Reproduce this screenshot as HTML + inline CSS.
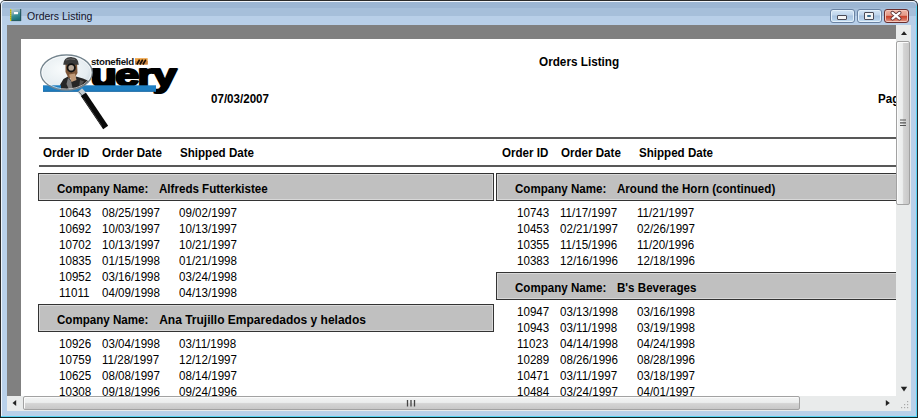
<!DOCTYPE html>
<html><head><meta charset="utf-8"><style>
html,body{margin:0;padding:0;width:918px;height:418px;overflow:hidden;background:#fff;font-family:"Liberation Sans",sans-serif;}
.ab{position:absolute;}
#frame{position:absolute;left:0;top:0;width:918px;height:418px;background:#b9d1ea;border-radius:5px 5px 0 0;overflow:hidden;}
.t1{position:absolute;left:0;top:2px;width:918px;height:6px;background:#9cb6d3;}
.t2{position:absolute;left:0;top:8px;width:918px;height:8px;background:#a6bfda;}
.t3{position:absolute;left:0;top:16px;width:918px;height:9px;background:#b8cfe8;}
#bd{position:absolute;left:0;top:0;width:916px;height:417px;border:1px solid #2a2a2a;border-bottom:0;border-radius:5px 5px 0 0;}
#hl{position:absolute;left:1px;top:1px;width:914px;height:416px;border-top:1px solid #f2f6fb;border-left:1px solid #eef5fc;border-radius:4px 4px 0 0;}
#cyanR{position:absolute;left:916px;top:6px;width:1px;height:411px;background:#58d4f4;}
#cyanB{position:absolute;left:1px;top:416px;width:916px;height:1px;background:#58d4f4;}
#darkB{position:absolute;left:0;top:417px;width:918px;height:1px;background:#102828;}
#title{position:absolute;left:27px;top:7px;font-size:11px;color:#14142a;line-height:18px;white-space:nowrap;transform:scaleX(0.955);transform-origin:0 0;}
.wb{position:absolute;top:9px;width:23px;height:12px;border:1px solid #6a83a3;border-radius:3px;background:linear-gradient(#d6e6f5 0,#c0d6ec 40%,#a9c3df 50%,#b4d0ea 80%,#cfe6f6 100%);box-shadow:inset 0 0 0 1px #e4f1fb;}
.wbx{position:absolute;top:9px;width:23px;height:12px;border:1px solid #6a2e2e;border-radius:3px;background:linear-gradient(#f0b4a4 0,#e49a88 45%,#c8412a 50%,#d0533c 65%,#e09c8c 100%);box-shadow:inset 0 0 0 1px #f4c8bc;}
#gray{position:absolute;left:7px;top:25px;width:889px;height:371px;background:#808080;}
#page{position:absolute;left:21px;top:39px;width:875px;height:357px;background:#fff;}
#content{position:absolute;left:0;top:0;width:918px;height:418px;clip-path:inset(39px 22px 22px 21px);}
.b{font-weight:bold;}
.tx{position:absolute;font-size:12px;line-height:16px;white-space:nowrap;color:#000;transform:scaleX(0.965);transform-origin:0 0;}
.line{position:absolute;height:2px;background:#585858;}
.band{position:absolute;height:24px;border:1px solid #333;background:#c0c0c0;box-shadow:inset 1px 1px 0 #d8d8d8, inset -1px -1px 0 #d8d8d8;padding:1px;}
#vs{position:absolute;left:896px;top:25px;width:15px;height:371px;background:#e9ebeb;}
#hs{position:absolute;left:7px;top:396px;width:889px;height:15px;background:#e9ebeb;}
#corner{position:absolute;left:896px;top:396px;width:15px;height:15px;background:#e9ebeb;}
#vthumb{position:absolute;left:896px;top:41px;width:12px;height:162px;border:1px solid #a2a2a2;border-radius:2px;background:linear-gradient(90deg,#f2f3f3 0,#eceeee 45%,#d4d4d4 55%,#c8c8c8 100%);box-shadow:inset 1px 1px 0 #fbfbfb;}
#hthumb{position:absolute;left:23px;top:396px;width:775px;height:12px;border:1px solid #a2a2a2;border-radius:2px;background:linear-gradient(#f2f3f3 0,#eceeee 45%,#d4d4d4 55%,#c8c8c8 100%);box-shadow:inset 1px 1px 0 #fbfbfb;}
</style></head><body>
<div id="frame">
  <div class="t1"></div><div class="t2"></div><div class="t3"></div>
  <div id="bd"></div><div id="hl"></div>
  <div id="cyanR"></div><div id="cyanB"></div><div id="darkB"></div>
</div>
<!-- app icon -->
<svg class="ab" style="left:9px;top:8px" width="14" height="15" viewBox="0 0 14 15">
  <defs><linearGradient id="ig" x1="0" y1="0" x2="0.3" y2="1"><stop offset="0" stop-color="#b4c8d0"/><stop offset="0.35" stop-color="#8ab0bc"/><stop offset="0.6" stop-color="#3a9098"/><stop offset="1" stop-color="#1a7078"/></linearGradient></defs>
  <rect x="2" y="1" width="10" height="12" fill="url(#ig)"/>
  <rect x="11.2" y="1" width="1" height="12" fill="#1e4e58"/>
  <rect x="2" y="12.2" width="10" height="0.9" fill="#2a5a60"/>
  <rect x="1" y="1" width="1.3" height="12" fill="#d8d020"/><g fill="#7a7a20"><rect x="1" y="2.5" width="1.3" height="0.6"/><rect x="1" y="4.5" width="1.3" height="0.6"/><rect x="1" y="6.5" width="1.3" height="0.6"/><rect x="1" y="8.5" width="1.3" height="0.6"/><rect x="1" y="10.5" width="1.3" height="0.6"/></g>
  <rect x="5" y="4" width="4" height="2.2" fill="#ffffff"/>
</svg>
<div id="title">Orders Listing</div>
<!-- window buttons -->
<div class="wb" style="left:830px"></div>
<div class="ab" style="left:837px;top:15px;width:8px;height:3px;border:1px solid #4a4a55;border-radius:1px;background:#f4f4f4;"></div>
<div class="wb" style="left:857px"></div>
<div class="ab" style="left:864px;top:12px;width:8px;height:6px;border:1px solid #4a4a55;border-radius:1px;background:#f4f4f4;"></div>
<div class="ab" style="left:867px;top:15px;width:4px;height:2px;background:#3e6f8e;border-radius:1px"></div>
<div class="wbx" style="left:884px"></div>
<svg class="ab" style="left:889px;top:10px" width="14" height="11" viewBox="0 0 14 11">
  <path d="M3.5 2.8 L10.5 8.6 M10.5 2.8 L3.5 8.6" stroke="#5a3030" stroke-width="3.8" stroke-linecap="round"/>
  <path d="M3.5 2.8 L10.5 8.6 M10.5 2.8 L3.5 8.6" stroke="#ffffff" stroke-width="2.2" stroke-linecap="round"/>
</svg>
<div id="gray"></div>
<div id="page"></div>
<div id="content">
<svg style="position:absolute;left:0;top:0" width="200" height="140" viewBox="0 0 200 140">
  <defs>
    <radialGradient id="lg" cx="0.42" cy="0.4" r="0.65"><stop offset="0" stop-color="#f8fbfc"/><stop offset="0.75" stop-color="#e6edf1"/><stop offset="1" stop-color="#ccd8e0"/></radialGradient>
    <clipPath id="lc"><ellipse cx="66.5" cy="72.6" rx="25.6" ry="17.4"/></clipPath>
  </defs>
  <!-- stonefield -->
  <text x="91" y="64.6" font-family="Liberation Sans" font-weight="bold" font-size="9.2" fill="#111" transform="translate(91 0) scale(1.06 1) translate(-91 0)" letter-spacing="-0.3">stonefield</text>
  <rect x="135" y="58.2" width="12.7" height="6.3" fill="#eea040"/><rect x="135" y="61" width="12.7" height="3.5" fill="#c88040"/>
  <path d="M136.8 64.5 L139.6 59.6 M139.9 64.5 L142.7 59.6 M143 64.5 L145.8 59.6" stroke="#1a1008" stroke-width="1.7"/>
  <!-- uery -->
  <text x="90.5" y="85.6" font-family="Liberation Sans" font-weight="bold" font-size="31.5" fill="#000" stroke="#000" stroke-width="2.2" stroke-linejoin="round" letter-spacing="-1.2" transform="translate(90.5 85.6) scale(1.37 0.97) translate(-90.5 -85.6)">uery</text>
  <!-- blue bar -->
  <rect x="43" y="85.3" width="113" height="6.3" fill="#1f7fc2"/>
  <rect x="43" y="90.8" width="113" height="0.9" fill="#17649e"/>
  <!-- lens -->
  <ellipse cx="66.5" cy="72.6" rx="25.6" ry="17.4" fill="url(#lg)"/>
  <g clip-path="url(#lc)">
    <path d="M57.5 92 L60.5 84 L63.5 79 L68 76.5 L71 80 L76 76.5 L83 78.5 L90 81.5 L93 86 L93 92 Z" fill="#262626"/>
    <path d="M68 78 L71 81 L73 90 L70 92 L66.5 84 Z" fill="#7a7a7a"/>
    <path d="M80 80 L84 81.5 L79 88 Z" fill="#555"/>
    <path d="M65.5 63 L77 63 L77.5 73 L74.5 78 L68.5 78 L65.5 72 Z" fill="#7c5638"/>
    <path d="M69 74.5 L75 73.5 L76.5 80 L71.5 82 Z" fill="#c09a78"/>
    <path d="M63.2 64.8 Q63.5 57 71 57 Q78.5 57 78.8 64.8 Z" fill="#3a3a3a"/>
    <path d="M66 60 Q70 58 75 59.5" stroke="#6a6a6a" stroke-width="1" fill="none"/>
    <circle cx="71.2" cy="67.8" r="3.7" fill="#b8a898" stroke="#111" stroke-width="1.8"/>
    <rect x="43" y="85.3" width="18" height="7" fill="#1f7fc2"/>
  </g>
  <ellipse cx="66.5" cy="72.6" rx="25.8" ry="17.6" fill="none" stroke="#74848e" stroke-width="1.3"/>
  <ellipse cx="66.5" cy="72.6" rx="24.5" ry="16.4" fill="none" stroke="#ffffff" stroke-width="0.8" opacity="0.8"/>
  <!-- handle -->
  <path d="M79.8 90.2 L85 96" stroke="#c4ccd2" stroke-width="6" stroke-linecap="butt"/>
  <path d="M78.6 91.4 L83.6 97.2" stroke="#5a6268" stroke-width="0.9" fill="none"/>
  <path d="M85 96.8 L104 125" stroke="#0a0a0a" stroke-width="6" stroke-linecap="square"/>
  <path d="M83.2 98.2 L101.6 125.6" stroke="#3a3a3a" stroke-width="1" fill="none"/>
</svg>

<div class="tx b" style="left:538.6px;top:54px;transform:scaleX(0.978);">Orders Listing</div>
<div class="tx b" style="left:211.3px;top:91px;">07/03/2007</div>
<div class="tx b" style="left:877.5px;top:91px;">Page</div>
<div class="line" style="left:39px;top:137px;width:870px"></div>
<div class="line" style="left:39px;top:165px;width:870px"></div>
<div class="tx b" style="left:42.9px;top:145px;">Order ID</div>
<div class="tx b" style="left:102.3px;top:145px;">Order Date</div>
<div class="tx b" style="left:179.6px;top:145px;">Shipped Date</div>
<div class="tx b" style="left:501.9px;top:145px;">Order ID</div>
<div class="tx b" style="left:561.3px;top:145px;">Order Date</div>
<div class="tx b" style="left:638.6px;top:145px;">Shipped Date</div>
<div class="band" style="left:38px;top:173px;width:452px"></div>
<div class="tx b" style="left:57.4px;top:181px;">Company Name:</div>
<div class="tx b" style="left:159.2px;top:181px;">Alfreds Futterkistee</div>
<div class="tx" style="left:58.5px;top:205px;">10643</div>
<div class="tx" style="left:102.4px;top:205px;">08/25/1997</div>
<div class="tx" style="left:178.9px;top:205px;">09/02/1997</div>
<div class="tx" style="left:58.5px;top:221px;">10692</div>
<div class="tx" style="left:102.4px;top:221px;">10/03/1997</div>
<div class="tx" style="left:178.9px;top:221px;">10/13/1997</div>
<div class="tx" style="left:58.5px;top:237px;">10702</div>
<div class="tx" style="left:102.4px;top:237px;">10/13/1997</div>
<div class="tx" style="left:178.9px;top:237px;">10/21/1997</div>
<div class="tx" style="left:58.5px;top:253px;">10835</div>
<div class="tx" style="left:102.4px;top:253px;">01/15/1998</div>
<div class="tx" style="left:178.9px;top:253px;">01/21/1998</div>
<div class="tx" style="left:58.5px;top:269px;">10952</div>
<div class="tx" style="left:102.4px;top:269px;">03/16/1998</div>
<div class="tx" style="left:178.9px;top:269px;">03/24/1998</div>
<div class="tx" style="left:58.5px;top:285px;">11011</div>
<div class="tx" style="left:102.4px;top:285px;">04/09/1998</div>
<div class="tx" style="left:178.9px;top:285px;">04/13/1998</div>
<div class="band" style="left:38px;top:304px;width:452px"></div>
<div class="tx b" style="left:57.4px;top:312px;">Company Name:</div>
<div class="tx b" style="left:159.2px;top:312px;transform:scaleX(1.0);">Ana Trujillo Emparedados y helados</div>
<div class="tx" style="left:58.5px;top:336px;">10926</div>
<div class="tx" style="left:102.4px;top:336px;">03/04/1998</div>
<div class="tx" style="left:178.9px;top:336px;">03/11/1998</div>
<div class="tx" style="left:58.5px;top:352px;">10759</div>
<div class="tx" style="left:102.4px;top:352px;">11/28/1997</div>
<div class="tx" style="left:178.9px;top:352px;">12/12/1997</div>
<div class="tx" style="left:58.5px;top:368px;">10625</div>
<div class="tx" style="left:102.4px;top:368px;">08/08/1997</div>
<div class="tx" style="left:178.9px;top:368px;">08/14/1997</div>
<div class="tx" style="left:58.5px;top:384px;">10308</div>
<div class="tx" style="left:102.4px;top:384px;">09/18/1996</div>
<div class="tx" style="left:178.9px;top:384px;">09/24/1996</div>
<div class="band" style="left:496px;top:173px;width:452px"></div>
<div class="tx b" style="left:515.4px;top:181px;">Company Name:</div>
<div class="tx b" style="left:617.2px;top:181px;">Around the Horn (continued)</div>
<div class="tx" style="left:516.5px;top:205px;">10743</div>
<div class="tx" style="left:560.4px;top:205px;">11/17/1997</div>
<div class="tx" style="left:636.9px;top:205px;">11/21/1997</div>
<div class="tx" style="left:516.5px;top:221px;">10453</div>
<div class="tx" style="left:560.4px;top:221px;">02/21/1997</div>
<div class="tx" style="left:636.9px;top:221px;">02/26/1997</div>
<div class="tx" style="left:516.5px;top:237px;">10355</div>
<div class="tx" style="left:560.4px;top:237px;">11/15/1996</div>
<div class="tx" style="left:636.9px;top:237px;">11/20/1996</div>
<div class="tx" style="left:516.5px;top:253px;">10383</div>
<div class="tx" style="left:560.4px;top:253px;">12/16/1996</div>
<div class="tx" style="left:636.9px;top:253px;">12/18/1996</div>
<div class="band" style="left:496px;top:272px;width:452px"></div>
<div class="tx b" style="left:515.4px;top:280px;">Company Name:</div>
<div class="tx b" style="left:617.2px;top:280px;">B's Beverages</div>
<div class="tx" style="left:516.5px;top:304px;">10947</div>
<div class="tx" style="left:560.4px;top:304px;">03/13/1998</div>
<div class="tx" style="left:636.9px;top:304px;">03/16/1998</div>
<div class="tx" style="left:516.5px;top:320px;">10943</div>
<div class="tx" style="left:560.4px;top:320px;">03/11/1998</div>
<div class="tx" style="left:636.9px;top:320px;">03/19/1998</div>
<div class="tx" style="left:516.5px;top:336px;">11023</div>
<div class="tx" style="left:560.4px;top:336px;">04/14/1998</div>
<div class="tx" style="left:636.9px;top:336px;">04/24/1998</div>
<div class="tx" style="left:516.5px;top:352px;">10289</div>
<div class="tx" style="left:560.4px;top:352px;">08/26/1996</div>
<div class="tx" style="left:636.9px;top:352px;">08/28/1996</div>
<div class="tx" style="left:516.5px;top:368px;">10471</div>
<div class="tx" style="left:560.4px;top:368px;">03/11/1997</div>
<div class="tx" style="left:636.9px;top:368px;">03/18/1997</div>
<div class="tx" style="left:516.5px;top:384px;">10484</div>
<div class="tx" style="left:560.4px;top:384px;">03/24/1997</div>
<div class="tx" style="left:636.9px;top:384px;">04/01/1997</div>

</div>
<!-- scrollbars -->
<div id="vs"></div>
<div id="hs"></div>
<div id="corner"></div>
<svg class="ab" style="left:900px;top:30px" width="8" height="6" viewBox="0 0 8 6"><path d="M1 5 L4 1.2 L7 5 Z" fill="#222"/></svg>
<svg class="ab" style="left:900px;top:386px" width="8" height="6" viewBox="0 0 8 6"><path d="M0.8 0.8 L7.2 0.8 L4 5.4 Z" fill="#222"/></svg>
<svg class="ab" style="left:11px;top:399px" width="6" height="9" viewBox="0 0 6 9"><path d="M5.2 1 L5.2 7 L1.5 4 Z" fill="#222"/></svg>
<svg class="ab" style="left:885px;top:399px" width="6" height="9" viewBox="0 0 6 9"><path d="M0.8 1 L0.8 7 L4.8 4 Z" fill="#222"/></svg>
<div id="vthumb"></div>
<div id="hthumb"></div>
<!-- grips -->
<svg class="ab" style="left:899px;top:118px" width="9" height="9" viewBox="0 0 9 9"><path d="M1 2 H7 M1 4.8 H7 M1 7.5 H7" stroke="#555" stroke-width="1.2"/></svg>
<svg class="ab" style="left:405px;top:399px" width="11" height="9" viewBox="0 0 11 9"><path d="M2.5 1 V7.5 M6 1 V7.5 M9.5 1 V7.5" stroke="#444" stroke-width="1.3"/></svg>
<svg class="ab" style="left:898px;top:398px" width="12" height="12" viewBox="0 0 12 12"><g fill="#a8a8a8"><rect x="9" y="3" width="1.2" height="1.2"/><rect x="6" y="6" width="1.2" height="1.2"/><rect x="9" y="6" width="1.2" height="1.2"/><rect x="3" y="9" width="1.2" height="1.2"/><rect x="6" y="9" width="1.2" height="1.2"/><rect x="9" y="9" width="1.2" height="1.2"/></g></svg>
</body></html>
